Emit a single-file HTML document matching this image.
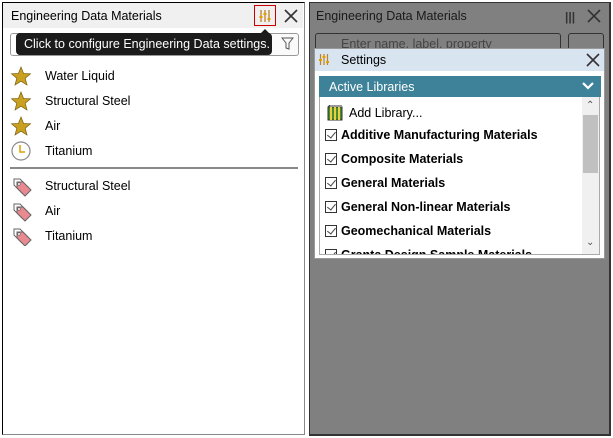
<!DOCTYPE html><html><head><style>
body{margin:0;width:613px;height:438px;background:#fff;font-family:"Liberation Sans",sans-serif;position:relative;overflow:hidden}
.a{position:absolute}
.t{font-size:12.5px;color:#000}
.r{position:absolute;left:5px;font-size:12.5px;font-weight:bold;white-space:nowrap}
.r i{position:absolute;left:0;top:1px;width:12px;height:12px;border:1px solid #333;box-sizing:border-box;background:#fff}
.r i:after{content:"";position:absolute;left:3px;top:0px;width:4px;height:7px;border:solid #444;border-width:0 1.3px 1.3px 0;transform:rotate(40deg)}
.r span{position:absolute;left:16px;top:0}
</style></head><body>
<div class="a" style="left:2px;top:2px;width:301px;height:431px;border:1px solid #000;border-right:1px solid #888;border-bottom:1px solid #888;"></div>
<div class="a" style="left:3px;top:3px;width:300px;height:25px;background:#f0f0f0"></div>
<div class="a t" style="left:11px;top:9px">Engineering Data Materials</div>
<div class="a" style="left:254px;top:5px;width:22px;height:21px;border:1px solid #c00;box-sizing:border-box"></div>
<svg class="a" style="left:259px;top:9px" width="12" height="14"><path d="M2 1v12M6 1v12M10 1v12" stroke="#c0802a" stroke-width="1.3"/><rect x="0.5" y="7" width="3" height="2" fill="#e0a000"/><rect x="4.5" y="4" width="3" height="2" fill="#e0a000"/><rect x="8.5" y="9" width="3" height="2" fill="#e0a000"/></svg>
<svg class="a" style="left:284px;top:9px" width="14" height="14"><path d="M1 1L13 13M13 1L1 13" stroke="#333" stroke-width="1.6"/></svg>
<div class="a" style="left:10px;top:33px;width:262px;height:21px;border:1px solid #999;border-radius:3px"></div>
<div class="a" style="left:265px;top:33px;width:32px;height:21px;border:1px solid #999;border-radius:3px;background:#fafafa"></div>
<svg class="a" style="left:281px;top:37px" width="13" height="13"><path d="M1 1H12L8 6V12L5 11V6Z" fill="none" stroke="#555"/></svg>
<div class="a" style="left:16px;top:33px;width:256px;height:22px;background:#1b1b1b;border-radius:4px"></div>
<div class="a" style="left:260px;top:29px;width:0;height:0;border:5px solid transparent;border-bottom-color:#1b1b1b;border-top:0"></div>
<div class="a" style="left:24px;top:37px;color:#fff;font-size:12.5px">Click to configure Engineering Data settings.</div>
<svg class="a" style="left:10px;top:66px" width="22" height="96">
<g fill="#c9a020" stroke="#7a6010" stroke-width=".7"><path id="s" d="M11 1L13.6 7.5L20.5 7.8L15.2 12.2L17 19L11 15.2L5 19L6.8 12.2L1.5 7.8L8.4 7.5Z"/><use href="#s" y="25"/><use href="#s" y="50"/></g>
<circle cx="11" cy="85" r="9" fill="#fff" stroke="#888" stroke-width="1.2"/><path d="M10 79v7h5" fill="none" stroke="#d9a000" stroke-width="1.5"/></svg>
<div class="a t" style="left:45px;top:69px">Water Liquid</div>
<div class="a t" style="left:45px;top:94px">Structural Steel</div>
<div class="a t" style="left:45px;top:119px">Air</div>
<div class="a t" style="left:45px;top:144px">Titanium</div>
<div class="a" style="left:10px;top:167px;width:288px;height:2px;background:#888"></div>
<svg class="a" style="left:11px;top:176px" width="22" height="70"><g id="g"><path d="M3 3h6l8 8-6 6-8-8z" fill="#fff" stroke="#666"/><path d="M6 6h6l8 8-6 6-8-8z" fill="#e98a90" stroke="#666"/><circle cx="8" cy="8" r="1.3" fill="#fff" stroke="#666" stroke-width=".6"/></g><use href="#g" y="25"/><use href="#g" y="50"/></svg>
<div class="a t" style="left:45px;top:179px">Structural Steel</div>
<div class="a t" style="left:45px;top:204px">Air</div>
<div class="a t" style="left:45px;top:229px">Titanium</div>

<div class="a" style="left:309px;top:2px;width:299px;height:431px;background:#808080;border:1px solid #333;border-bottom:2px solid #333;border-right:2px solid #333"></div>
<div class="a t" style="left:316px;top:9px;color:#1a1a1a">Engineering Data Materials</div>
<div class="a" style="left:565px;top:10px;font-size:12px;color:#333;font-weight:bold">|||</div>
<svg class="a" style="left:587px;top:9px" width="14" height="14"><path d="M1 1L13 13M13 1L1 13" stroke="#333" stroke-width="1.6"/></svg>
<div class="a" style="left:315px;top:33px;width:244px;height:20px;border:1px solid #333;border-radius:3px"></div>
<div class="a" style="left:341px;top:37px;font-size:12.5px;color:#444">Enter name, label, property</div>
<div class="a" style="left:568px;top:33px;width:34px;height:20px;border:1px solid #333;border-radius:3px"></div>
<div class="a" style="left:314px;top:48px;width:291px;height:211px;background:#fff;border:1px solid #999;box-sizing:border-box"></div>
<div class="a" style="left:315px;top:49px;width:289px;height:22px;background:#d8e4ef"></div>
<svg class="a" style="left:319px;top:53px" width="10" height="13"><path d="M1.5 1v11M5 1v11M8.5 1v11" stroke="#c0802a" stroke-width="1.2"/><rect x="0" y="6" width="3" height="2" fill="#e0a000"/><rect x="3.5" y="3" width="3" height="2" fill="#e0a000"/><rect x="7" y="8" width="3" height="2" fill="#e0a000"/></svg>
<div class="a t" style="left:341px;top:53px">Settings</div>
<svg class="a" style="left:586px;top:53px" width="14" height="14"><path d="M1 1L13 13M13 1L1 13" stroke="#333" stroke-width="1.6"/></svg>
<div class="a" style="left:319px;top:76px;width:282px;height:21px;background:#3d8299"></div>
<div class="a" style="left:329px;top:80px;color:#fff;font-size:12.5px">Active Libraries</div>
<svg class="a" style="left:582px;top:82px" width="12" height="9"><path d="M1 1l5 5 5-5" fill="none" stroke="#fff" stroke-width="2.2"/></svg>
<div class="a" style="left:319px;top:97px;width:281px;height:158px;border:1px solid #aaa;border-top:0;box-sizing:border-box;overflow:hidden">
<div class="a" style="left:262px;top:0;width:17px;height:157px;background:#f0f0f0"></div>
<div class="a" style="left:263px;top:18px;width:15px;height:58px;background:#c0c0c0"></div>
<div class="a" style="left:266px;top:3px;font-size:10px;color:#555">&#8963;</div>
<div class="a" style="left:266px;top:140px;font-size:10px;color:#555">&#8964;</div>
<svg class="a" style="left:7px;top:8px" width="16" height="16"><rect x="1" y="2" width="14" height="13" fill="#4a8a30" stroke="#333"/><path d="M4 2v13M8 2v13M12 2v13" stroke="#e8d040" stroke-width="2"/><path d="M1 2l2-2h12" fill="none" stroke="#333"/></svg>
<div class="a t" style="left:29px;top:9px">Add Library...</div>
<div class="r" style="top:31px"><i></i><span>Additive Manufacturing Materials</span></div>
<div class="r" style="top:55px"><i></i><span>Composite Materials</span></div>
<div class="r" style="top:79px"><i></i><span>General Materials</span></div>
<div class="r" style="top:103px"><i></i><span>General Non-linear Materials</span></div>
<div class="r" style="top:127px"><i></i><span>Geomechanical Materials</span></div>
<div class="r" style="top:151px"><i></i><span>Granta Design Sample Materials</span></div>
</div>
</body></html>
